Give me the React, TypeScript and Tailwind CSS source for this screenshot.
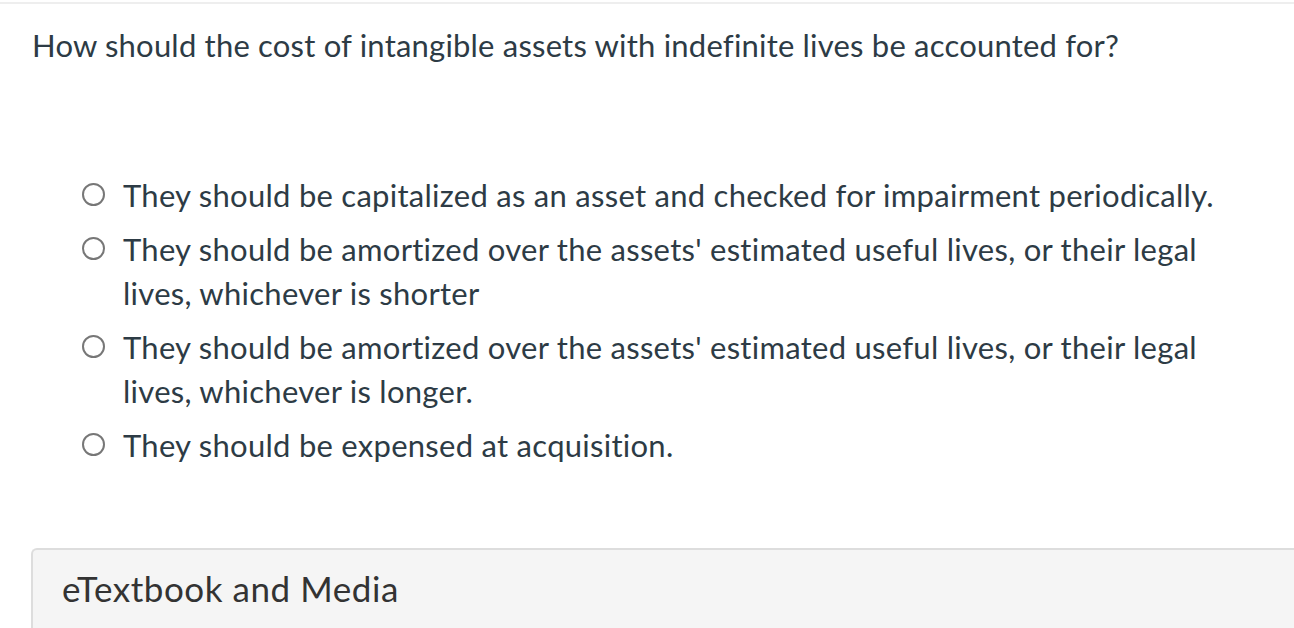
const options = [
  "They should be capitalized as an asset and checked for impairment periodically.",
  "They should be amortized over the assets' estimated useful lives, or their legal lives, whichever is shorter",
  "They should be amortized over the assets' estimated useful lives, or their legal lives, whichever is longer.",
  "They should be expensed at acquisition.",
];

export default function App() {
  return (
    <div className="w-[1294px] h-[628px] overflow-hidden bg-white font-['Lato',sans-serif] text-[#2d3b45]">
      <div className="pt-[2px]">
        <div className="h-[2px] bg-[#eeeeee]" />
      </div>
      <div className="pl-[32px] pt-[21px] text-[31px] leading-[40px] tracking-[0.2px]">
        How should the cost of intangible assets with indefinite lives be accounted for?
      </div>
      <div className="pl-[82px] pt-[108px] flex flex-col gap-[10px]">
        {options.map((o) => (
          <label key={o} className="flex items-start gap-[18px] text-[31px] leading-[44px] tracking-[0.27px]">
            <span className="mt-[10px] shrink-0 w-[23px] h-[23px] rounded-full border-2 border-[#777777]" />
            <span className="w-[1120px]">{o}</span>
          </label>
        ))}
      </div>
      <div className="ml-[31px] mt-[81px] h-[100px] rounded-tl-[6px] border-t-2 border-l-2 border-[#dddddd] bg-[#f5f5f5] pl-[29px] pt-[18px] text-[35px] leading-[40px] tracking-[0.55px] text-[#333333]">
        eTextbook and Media
      </div>
    </div>
  );
}
